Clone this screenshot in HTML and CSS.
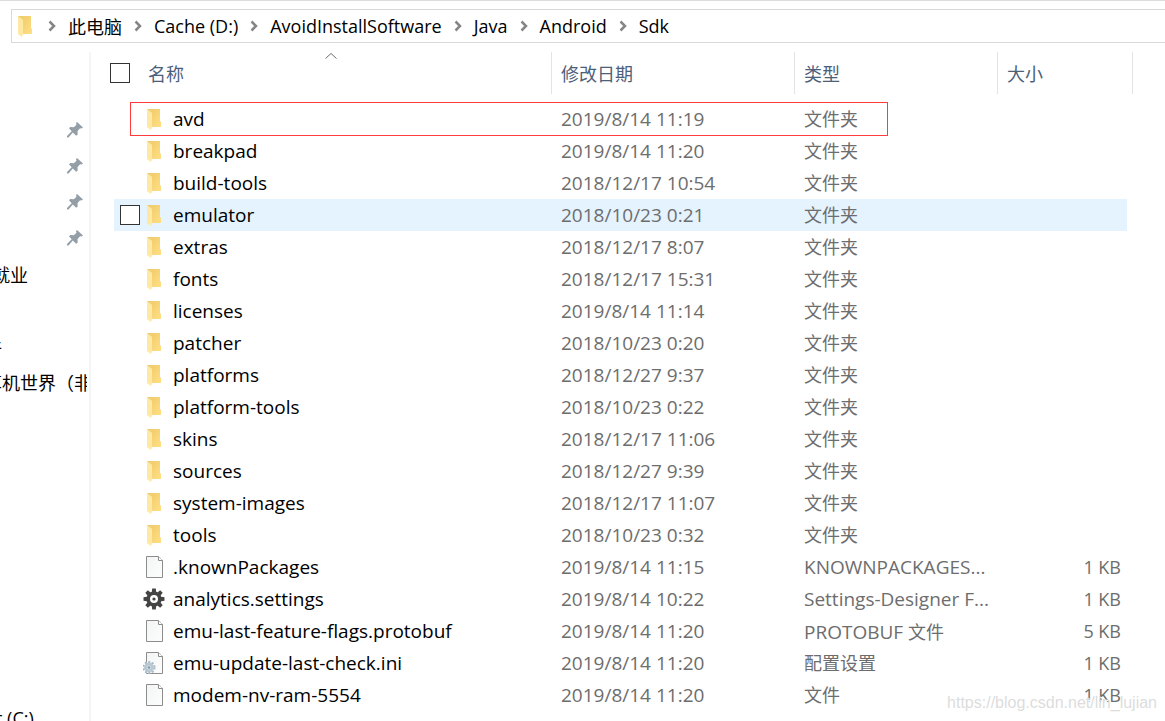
FILE: index.html
```html
<!DOCTYPE html>
<html lang="zh-CN">
<head>
    <meta charset="UTF-8">
    <meta name="viewport" content="width=device-width, initial-scale=1.0">
    <title>Sdk</title>
    <link rel="stylesheet" href="styles.css">
</head>
<body>
    <!-- shared icons -->
    <svg class="sprite" aria-hidden="true">
        <defs>
            <linearGradient id="folder-back" x1="0" y1="0" x2="1" y2="1">
                <stop offset="0" stop-color="#edc968"/>
                <stop offset="1" stop-color="#ffdf85"/>
            </linearGradient>
            <linearGradient id="page-fill" x1="0" y1="0" x2="1" y2="1">
                <stop offset="0" stop-color="#f3f4f5"/>
                <stop offset="1" stop-color="#fdfdfd"/>
            </linearGradient>
        </defs>
        <symbol id="folder" viewBox="0 0 22 22">
            <path d="M4 1h13v12l1 1v5H4z" fill="url(#folder-back)"/>
            <path d="M4 1l4 3 1 1v14l-1 3-4-3z" fill="#ffe8a2"/>
        </symbol>
        <symbol id="page" viewBox="0 0 22 22">
            <path d="M3.500 .5h12l4 4v17h-16z" fill="url(#page-fill)" stroke="#8c8c8c"/>
            <path d="M15.500 .5v4h4" fill="#fff" stroke="#8c8c8c"/>
        </symbol>
        <symbol id="gear" viewBox="0 0 22 22">
            <g fill="#444">
                <path id="tooth" d="M9.200 .5h3.600l.6 5h-4.800zM9.200 21.500h3.600l.6-5h-4.800z"/>
                <use href="#tooth" transform="rotate(45 11 11)"/>
                <use href="#tooth" transform="rotate(90 11 11)"/>
                <use href="#tooth" transform="rotate(135 11 11)"/>
            </g>
            <circle cx="11" cy="11" r="5.800" fill="none" stroke="#444" stroke-width="3.600"/>
            <circle cx="11" cy="11" r="1.600" fill="#444"/>
        </symbol>
        <symbol id="ini" viewBox="0 0 22 22">
            <use href="#page" width="22" height="22"/>
            <circle cx="6" cy="15.500" r="5.500" fill="none" stroke="#a9bac6" stroke-width="2" stroke-dasharray="2 1.500"/>
            <circle cx="6" cy="15.500" r="3.500" fill="#dce6ed" stroke="#b9c9d4" stroke-width="3"/>
            <circle cx="6" cy="15.500" r="1.300" fill="#8299a6"/>
        </symbol>
        <symbol id="pin" viewBox="0 0 16 16">
            <path d="M10 0l6 5.500-1.500 1-1.500-.3-2.500 3 .2 3.300-1.500 1.300-3.400-3.300L1.500 15.500H0V14l4.700-4.800L2 6.300 3.300 5l3.500.2 2.700-2.500L9 1z" fill="#939ea7"/>
        </symbol>
        <symbol id="chevron" viewBox="0 0 8 12">
            <path d="M1.500 1.500L6 6l-4.500 4.500" fill="none" stroke="#858585" stroke-width="2.500"/>
        </symbol>
    </svg>

    <nav class="address-bar">
        <svg class="icon"><use href="#folder"/></svg>
        <svg class="chevron"><use href="#chevron"/></svg>
        <a class="cjk" href="#">此电脑</a>
        <svg class="chevron"><use href="#chevron"/></svg>
        <a href="#">Cache (D:)</a>
        <svg class="chevron"><use href="#chevron"/></svg>
        <a href="#">AvoidInstallSoftware</a>
        <svg class="chevron"><use href="#chevron"/></svg>
        <a href="#">Java</a>
        <svg class="chevron"><use href="#chevron"/></svg>
        <a href="#">Android</a>
        <svg class="chevron"><use href="#chevron"/></svg>
        <a href="#">Sdk</a>
    </nav>

    <div class="explorer">
        <aside class="sidebar">
            <ul class="tree">
                <li class="pinned"><svg class="pin"><use href="#pin"/></svg></li>
                <li class="pinned"><svg class="pin"><use href="#pin"/></svg></li>
                <li class="pinned"><svg class="pin"><use href="#pin"/></svg></li>
                <li class="pinned"><svg class="pin"><use href="#pin"/></svg></li>
                <li class="cjk quick">就业</li>
                <li></li>
                <li class="cjk folder">件</li>
                <li class="cjk folder">算机世界（非</li>
            </ul>
            <ul class="tree drives">
                <li class="drive">t (C:)</li>
            </ul>
        </aside>

        <main class="files">
            <table class="file-table">
                <colgroup>
                    <col class="col-name">
                    <col class="col-date">
                    <col class="col-type">
                    <col class="col-size">
                </colgroup>
                <thead>
                    <tr>
                        <th class="sorted">
                            <svg class="sort-arrow" viewBox="0 0 12 6"><path d="M.5 5.500L6 .5l5.500 5" fill="none" stroke="#6d6d6d"/></svg>
                            <div class="head"><input type="checkbox" aria-label="全选"><span>名称</span></div>
                        </th>
                        <th><div class="head">修改日期</div></th>
                        <th><div class="head">类型</div></th>
                        <th><div class="head">大小</div></th>
                    </tr>
                </thead>
                <tbody>
                    <tr class="marked">
                        <td><label class="name"><input type="checkbox"><svg class="icon"><use href="#folder"/></svg>avd</label></td>
                        <td>2019/8/14 11:19</td><td class="cjk">文件夹</td><td></td>
                    </tr>
                    <tr>
                        <td><label class="name"><input type="checkbox"><svg class="icon"><use href="#folder"/></svg>breakpad</label></td>
                        <td>2019/8/14 11:20</td><td class="cjk">文件夹</td><td></td>
                    </tr>
                    <tr>
                        <td><label class="name"><input type="checkbox"><svg class="icon"><use href="#folder"/></svg>build-tools</label></td>
                        <td>2018/12/17 10:54</td><td class="cjk">文件夹</td><td></td>
                    </tr>
                    <tr class="active">
                        <td><label class="name"><input type="checkbox"><svg class="icon"><use href="#folder"/></svg>emulator</label></td>
                        <td>2018/10/23 0:21</td><td class="cjk">文件夹</td><td></td>
                    </tr>
                    <tr>
                        <td><label class="name"><input type="checkbox"><svg class="icon"><use href="#folder"/></svg>extras</label></td>
                        <td>2018/12/17 8:07</td><td class="cjk">文件夹</td><td></td>
                    </tr>
                    <tr>
                        <td><label class="name"><input type="checkbox"><svg class="icon"><use href="#folder"/></svg>fonts</label></td>
                        <td>2018/12/17 15:31</td><td class="cjk">文件夹</td><td></td>
                    </tr>
                    <tr>
                        <td><label class="name"><input type="checkbox"><svg class="icon"><use href="#folder"/></svg>licenses</label></td>
                        <td>2019/8/14 11:14</td><td class="cjk">文件夹</td><td></td>
                    </tr>
                    <tr>
                        <td><label class="name"><input type="checkbox"><svg class="icon"><use href="#folder"/></svg>patcher</label></td>
                        <td>2018/10/23 0:20</td><td class="cjk">文件夹</td><td></td>
                    </tr>
                    <tr>
                        <td><label class="name"><input type="checkbox"><svg class="icon"><use href="#folder"/></svg>platforms</label></td>
                        <td>2018/12/27 9:37</td><td class="cjk">文件夹</td><td></td>
                    </tr>
                    <tr>
                        <td><label class="name"><input type="checkbox"><svg class="icon"><use href="#folder"/></svg>platform-tools</label></td>
                        <td>2018/10/23 0:22</td><td class="cjk">文件夹</td><td></td>
                    </tr>
                    <tr>
                        <td><label class="name"><input type="checkbox"><svg class="icon"><use href="#folder"/></svg>skins</label></td>
                        <td>2018/12/17 11:06</td><td class="cjk">文件夹</td><td></td>
                    </tr>
                    <tr>
                        <td><label class="name"><input type="checkbox"><svg class="icon"><use href="#folder"/></svg>sources</label></td>
                        <td>2018/12/27 9:39</td><td class="cjk">文件夹</td><td></td>
                    </tr>
                    <tr>
                        <td><label class="name"><input type="checkbox"><svg class="icon"><use href="#folder"/></svg>system-images</label></td>
                        <td>2018/12/17 11:07</td><td class="cjk">文件夹</td><td></td>
                    </tr>
                    <tr>
                        <td><label class="name"><input type="checkbox"><svg class="icon"><use href="#folder"/></svg>tools</label></td>
                        <td>2018/10/23 0:32</td><td class="cjk">文件夹</td><td></td>
                    </tr>
                    <tr>
                        <td><label class="name"><input type="checkbox"><svg class="icon"><use href="#page"/></svg>.knownPackages</label></td>
                        <td>2019/8/14 11:15</td><td>KNOWNPACKAGES...</td><td>1 KB</td>
                    </tr>
                    <tr>
                        <td><label class="name"><input type="checkbox"><svg class="icon"><use href="#gear"/></svg>analytics.settings</label></td>
                        <td>2019/8/14 10:22</td><td>Settings-Designer F...</td><td>1 KB</td>
                    </tr>
                    <tr>
                        <td><label class="name"><input type="checkbox"><svg class="icon"><use href="#page"/></svg>emu-last-feature-flags.protobuf</label></td>
                        <td>2019/8/14 11:20</td><td>PROTOBUF <span class="cjk">文件</span></td><td>5 KB</td>
                    </tr>
                    <tr>
                        <td><label class="name"><input type="checkbox"><svg class="icon"><use href="#ini"/></svg>emu-update-last-check.ini</label></td>
                        <td>2019/8/14 11:20</td><td class="cjk">配置设置</td><td>1 KB</td>
                    </tr>
                    <tr>
                        <td><label class="name"><input type="checkbox"><svg class="icon"><use href="#page"/></svg>modem-nv-ram-5554</label></td>
                        <td>2019/8/14 11:20</td><td class="cjk">文件</td><td>1 KB</td>
                    </tr>
                </tbody>
            </table>
        </main>
    </div>
    <div class="watermark">https://blog.csdn.net/lin_lujian</div>
</body>
</html>
```
FILE: styles.css
```css
* {
    box-sizing: border-box;
}
body {
    margin: 0;
    height: 100vh;
    display: flex;
    flex-direction: column;
    overflow: hidden;
    position: relative;
    border-top: 1px solid #dcdcdc;
    background: #fff;
    color: #000;
    font-family: "Open Sans", "Noto Sans CJK SC", sans-serif;
    font-size: 18px;
    line-height: 24px;
}
.sprite {
    position: absolute;
    width: 0;
    height: 0;
}
.cjk {
    font-family: "Noto Sans CJK SC", sans-serif;
    font-size: 18px;
}
.icon {
    width: 22px;
    height: 22px;
    flex: none;
}

/* address bar */
.address-bar {
    display: flex;
    align-items: center;
    gap: 12px;
    height: 34px;
    flex: none;
    margin: 8px 0 0 11px;
    padding-left: 2px;
    border: 1px solid #d9d9d9;
    border-right: none;
    white-space: nowrap;
}
.address-bar a {
    color: #000;
    text-decoration: none;
}
.chevron {
    width: 8px;
    height: 12px;
    flex: none;
}

.explorer {
    display: flex;
    flex: 1;
    min-height: 0;
    margin-top: 9px;
}

/* navigation pane */
.sidebar {
    display: flex;
    flex-direction: column;
    justify-content: space-between;
    width: 91px;
    flex: none;
    padding-top: 60px;
    padding-right: 2px;
    border-right: 2px solid #f5f5f5;
    overflow: hidden;
}
.tree {
    list-style: none;
    margin: 0;
    padding: 0;
    overflow: hidden;
}
.tree li {
    display: flex;
    align-items: center;
    height: 36px;
    white-space: nowrap;
}
.tree .pinned {
    justify-content: flex-end;
    padding-right: 4px;
}
.tree .quick {
    margin-left: -8px;
}
.tree .folder {
    margin-left: -16px;
}
.tree .drive {
    margin-left: -4px;
}
.drives {
    margin-bottom: -15px;
}
.pin {
    width: 16px;
    height: 16px;
}

/* file list */
.files {
    flex: 1;
    min-width: 0;
    padding-left: 19px;
    overflow: hidden;
}
.file-table {
    width: 1023px;
    table-layout: fixed;
    border-collapse: separate;
    border-spacing: 0;
}
.col-name {
    width: 442px;
}
.col-date {
    width: 243px;
}
.col-type {
    width: 203px;
}
.file-table th {
    position: relative;
    padding: 0 0 9px;
    text-align: left;
}
.head {
    display: flex;
    align-items: center;
    gap: 18px;
    height: 42px;
    padding-left: 9px;
    border-right: 1px solid #e3e3e3;
    color: #4c607a;
    font-family: "Noto Sans CJK SC", sans-serif;
    font-size: 18px;
    font-weight: 400;
}
.sorted .head {
    padding-left: 0;
}
.sort-arrow {
    position: absolute;
    top: 1px;
    left: 50%;
    width: 12px;
    height: 6px;
    margin-left: -6px;
}
.file-table td {
    height: 32px;
    padding: 0 0 0 9px;
    color: #6d6d6d;
    font-size: 19px;
    white-space: nowrap;
    background-clip: padding-box;
}
.file-table td.cjk {
    padding-bottom: 2px;
    font-size: 18px;
}
.file-table td:first-child {
    position: relative;
    padding-left: 6px;
    border-left: 4px solid transparent;
    color: #000;
}
.file-table td:last-child {
    padding-right: 6px;
    border-right: 6px solid transparent;
    font-size: 18px;
    text-align: right;
}
.name {
    display: flex;
    align-items: center;
}
.name .icon {
    margin: 0 8px 0 3px;
}
input[type="checkbox"] {
    appearance: none;
    width: 20px;
    height: 20px;
    flex: none;
    margin: 0;
    border: 1px solid #333;
    background: #fff;
}
input[type="checkbox"]:checked {
    background: #0078d7;
}
td input[type="checkbox"] {
    opacity: 0;
}
tr:hover td input[type="checkbox"],
.active td input[type="checkbox"] {
    opacity: 1;
}
.active td {
    background-color: #e5f3ff;
}
/* red frame around the highlighted folder */
.marked td:first-child::after {
    content: "";
    position: absolute;
    top: -1px;
    left: 16px;
    width: 756px;
    height: 32px;
    border: 1px solid #ff3b3b;
    pointer-events: none;
}

.watermark {
    position: absolute;
    right: 8px;
    bottom: 6px;
    color: rgba(205, 205, 205, 0.7);
    font-family: "Liberation Sans", Arial, sans-serif;
    font-size: 16px;
    text-shadow: 1px 1px 0 #fff;
}
```
